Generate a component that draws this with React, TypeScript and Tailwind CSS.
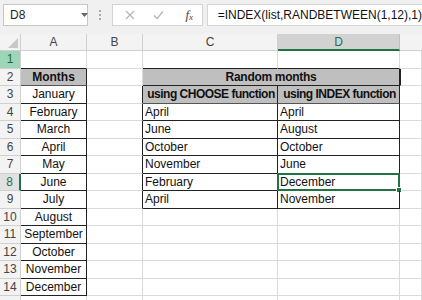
const months = ['January', 'February', 'March', 'April', 'May', 'June', 'July', 'August', 'September', 'October', 'November', 'December'];
const choose = ['April', 'June', 'October', 'November', 'February', 'April'];
const index = ['April', 'August', 'October', 'June', 'December', 'November'];

const grid = 'border-r border-b border-[#dadada]';

function RowHeader({ n }: { n: number }) {
  const tone =
    n === 1
      ? 'bg-[#9fd5b7] text-[#1d6b40]'
      : n === 8
        ? 'bg-[#e1e1e1] text-[#217346] border-r-2 border-r-[#217346]'
        : 'bg-[#f3f3f3] text-[#444]';
  return (
    <div
      className={`w-[21px] shrink-0 flex items-center justify-center text-[12px] border-b border-r border-[#d0d0d0] ${tone}`}
    >
      {n <= 14 ? n : null}
    </div>
  );
}

function Row({ n }: { n: number }) {
  const inA = n >= 2 && n <= 14;
  const inCD = n >= 2 && n <= 9;
  const aTop = n === 1 || n === 2;
  const cdTop = n === 1 || n === 2 || n === 3;

  let a: React.ReactNode = null;
  if (n === 2) a = <span className="font-bold">Months</span>;
  else if (inA) a = months[n - 3];

  let c: React.ReactNode = null;
  let d: React.ReactNode = null;
  if (n === 3) {
    c = <span className="font-bold tracking-[-0.5px]">using CHOOSE function</span>;
    d = <span className="font-bold tracking-[-0.5px]">using INDEX function</span>;
  } else if (n >= 4 && n <= 9) {
    c = choose[n - 4];
    d = index[n - 4];
  }

  return (
    <div className="flex h-[17.5px]">
      <RowHeader n={n} />
      <div
        className={`w-[66px] shrink-0 flex items-center justify-center border-r border-b ${
          inA ? 'border-[#222]' : aTop ? 'border-r-[#dadada] border-b-[#222]' : 'border-[#dadada]'
        } ${n === 2 ? 'bg-[#bfbfbf] border-b-[#555]' : ''}`}
      >
        {a}
      </div>
      <div className={`w-[56px] shrink-0 ${grid} ${inCD && n !== 2 ? 'border-r-[#222]' : ''}`} />
      {n === 2 ? (
        <div className="w-[257px] shrink-0 flex items-center justify-center bg-[#bfbfbf] border-r border-b border-[#222] font-bold tracking-[-0.3px]">
          Random months
        </div>
      ) : (
        <>
          <div
            className={`w-[135px] shrink-0 flex items-center pl-[2px] border-r border-b ${
              inCD ? 'border-[#222]' : cdTop ? 'border-r-[#dadada] border-b-[#222]' : 'border-[#dadada]'
            } ${n === 3 ? 'bg-[#bfbfbf] justify-center pl-0 border-b-[#555]' : ''}`}
          >
            {c}
          </div>
          <div
            className={`relative w-[122px] shrink-0 flex items-center pl-[2px] border-r border-b ${
              inCD ? 'border-[#222]' : cdTop ? 'border-r-[#dadada] border-b-[#222]' : 'border-[#dadada]'
            } ${n === 3 ? 'bg-[#bfbfbf] justify-center pl-0 border-b-[#555]' : ''}`}
          >
            {d}
            {n === 8 && (
              <>
                <div className="absolute -left-[1px] -top-[1px] -right-[1px] -bottom-[1px] border-2 border-[#217346]" />
                <div className="absolute -right-[3px] -bottom-[3px] w-[6px] h-[6px] bg-[#217346] border border-white" />
              </>
            )}
          </div>
        </>
      )}
      <div className={`flex-1 ${grid} ${n === 2 ? 'border-l border-l-[#222]' : ''}`} />
    </div>
  );
}

export default function App() {
  const rows = Array.from({ length: 15 }, (_, i) => i + 1);
  return (
    <div
      className="w-[422px] h-[300px] overflow-hidden bg-white text-[12px] text-[#111]"
      style={{ fontFamily: '"Liberation Sans", Arial, sans-serif' }}
    >
      {/* formula bar */}
      <div className="h-[34px] bg-[#f0f0f0] flex items-start pt-[4px] pl-[3px]">
        <div className="w-[89px] h-[22px] bg-white border border-[#c6c6c6] flex items-center pl-[6px] text-[12px] text-[#222] relative">
          D8
          <svg className="absolute left-[77px] top-[8px]" width="7" height="5" viewBox="0 0 7 5">
            <path d="M0 0 L7 0 L3.5 4 Z" fill="#666" />
          </svg>
        </div>
        <div className="w-[26px] h-[22px] flex flex-col items-center justify-center gap-[2px]">
          <div className="w-[2px] h-[2px] bg-[#aaa]" />
          <div className="w-[2px] h-[2px] bg-[#aaa]" />
          <div className="w-[2px] h-[2px] bg-[#aaa]" />
        </div>
        <div className="w-[95px] h-[22px] bg-white border border-[#d4d4d4] flex items-center">
          <svg className="ml-[12px]" width="10" height="10" viewBox="0 0 10 10">
            <path d="M1 1 L9 9 M9 1 L1 9" stroke="#b5b5b5" strokeWidth="1.2" />
          </svg>
          <svg className="ml-[18px]" width="11" height="10" viewBox="0 0 11 10">
            <path d="M1 5.5 L4 8.5 L10 1.5" stroke="#b5b5b5" strokeWidth="1.2" fill="none" />
          </svg>
          <span
            className="ml-[21px] italic text-[13px] text-[#444]"
            style={{ fontFamily: '"Liberation Serif", serif' }}
          >
            f<span className="text-[9px] align-[-1px]">x</span>
          </span>
        </div>
        <div className="ml-[4px] flex-1 h-[22px] bg-white border border-[#d4d4d4] border-r-0 flex items-center pl-[10px] text-[12px] text-[#111] whitespace-nowrap">
          =INDEX(list,RANDBETWEEN(1,12),1)
        </div>
      </div>

      {/* column headers */}
      <div className="flex h-[17px] text-[12px] text-[#444]">
        <div className="w-[21px] shrink-0 bg-[#f3f3f3] border-r border-b border-[#d0d0d0] relative">
          <svg className="absolute right-[2px] bottom-[2px]" width="10" height="10" viewBox="0 0 10 10">
            <path d="M10 0 L10 10 L0 10 Z" fill="#c8c8c8" />
          </svg>
        </div>
        <div className="w-[66px] shrink-0 bg-[#f3f3f3] border-r border-b border-[#d0d0d0] flex items-center justify-center">A</div>
        <div className="w-[56px] shrink-0 bg-[#f3f3f3] border-r border-b border-[#d0d0d0] flex items-center justify-center">B</div>
        <div className="w-[135px] shrink-0 bg-[#f3f3f3] border-r border-b border-[#d0d0d0] flex items-center justify-center">C</div>
        <div className="w-[122px] shrink-0 bg-[#d2d2d2] border-r border-[#c0c0c0] border-b-2 border-b-[#217346] flex items-center justify-center text-[#217346]">D</div>
        <div className="flex-1 bg-[#f3f3f3] border-b border-[#d0d0d0]" />
      </div>

      {rows.map((n) => (
        <Row key={n} n={n} />
      ))}
    </div>
  );
}
